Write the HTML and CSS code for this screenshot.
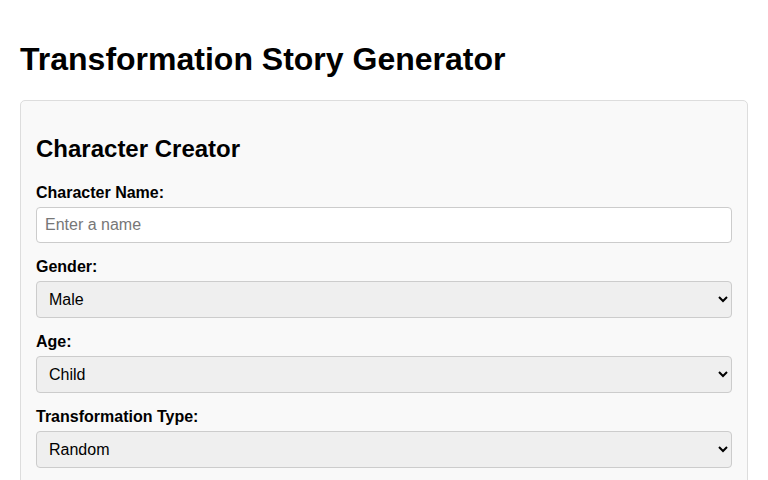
FILE: index.html
```html
<!DOCTYPE html>
<html>
<head>
<meta charset="utf-8">
<title>Transformation Story Generator</title>
<link rel="stylesheet" href="styles.css">
</head>
<body>
<h1 class="title">Transformation Story Generator</h1>
<div class="panel">
  <h2 class="panel-title">Character Creator</h2>
  <div class="field">
    <label class="field-label" for="name">Character Name:</label>
    <input class="field-input" id="name" type="text" placeholder="Enter a name">
  </div>
  <div class="field">
    <label class="field-label" for="gender">Gender:</label>
    <select class="field-select" id="gender">
      <option>Male</option>
      <option>Female</option>
    </select>
  </div>
  <div class="field">
    <label class="field-label" for="age">Age:</label>
    <select class="field-select" id="age">
      <option>Child</option>
      <option>Teen</option>
      <option>Adult</option>
    </select>
  </div>
  <div class="field">
    <label class="field-label" for="type">Transformation Type:</label>
    <select class="field-select" id="type">
      <option>Random</option>
    </select>
  </div>
</div>
</body>
</html>
```
FILE: styles.css
```css
body {
  margin: 0;
  padding: 20px;
  font-family: "Liberation Sans", Arial, sans-serif;
  color: #000;
  background: #fff;
}
.title {
  font-size: 32px;
  margin: 21px 0 22px;
}
.panel {
  background: #f9f9f9;
  border: 1px solid #ddd;
  border-radius: 5px;
  padding: 15px;
}
.panel-title {
  font-size: 24px;
  margin: 19px 0 21px;
}
.field {
  margin-bottom: 15px;
}
.field-label {
  display: block;
  font-weight: bold;
  font-size: 16px;
  margin-bottom: 5px;
}
.field-input,
.field-select {
  display: block;
  width: 100%;
  box-sizing: border-box;
  padding: 8px;
  border: 1px solid #ccc;
  border-radius: 4px;
  font-family: "Liberation Sans", Arial, sans-serif;
  font-size: 16px;
}
.field-input {
  background: #fff;
}
.field-input::placeholder {
  color: #777;
}
.field-select {
  height: 37px;
  background-color: #efefef;
  color: #000;
}
```
